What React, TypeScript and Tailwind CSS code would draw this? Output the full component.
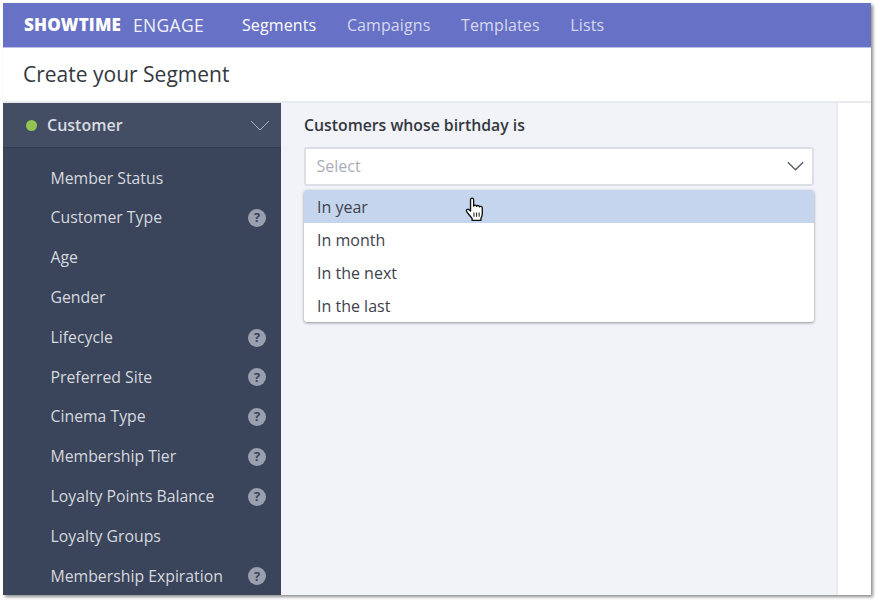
const NAV = ['Segments', 'Campaigns', 'Templates', 'Lists']

const ITEMS: { label: string; help?: boolean }[] = [
  { label: 'Member Status' },
  { label: 'Customer Type', help: true },
  { label: 'Age' },
  { label: 'Gender' },
  { label: 'Lifecycle', help: true },
  { label: 'Preferred Site', help: true },
  { label: 'Cinema Type', help: true },
  { label: 'Membership Tier', help: true },
  { label: 'Loyalty Points Balance', help: true },
  { label: 'Loyalty Groups' },
  { label: 'Membership Expiration', help: true },
]

const OPTIONS = ['In year', 'In month', 'In the next', 'In the last']

function Chevron({ className, stroke }: { className: string; stroke: number }) {
  return (
    <svg viewBox="0 0 20 11" fill="none" stroke="currentColor" strokeWidth={stroke} className={className}>
      <path d="M1 1l9 9 9-9" />
    </svg>
  )
}

function HandCursor() {
  return (
    <svg width="20" height="26" viewBox="0 0 19 25" className="absolute left-[161px] top-[7px]">
      <path
        d="M5.2 2.6c0-2 3-2 3 0v6.2c.3-1.3 2.700-1.300 2.900.2.400-1.200 2.600-1 2.800.5.500-.9 2.500-.6 2.600 1v5.500c0 2.200-.6 3.200-1.300 4.500v2H6.700v-1.800C5 18.500 3.200 16.600 1.500 14c-1-1.700.9-3 2.300-1.800l1.400 1.400V2.600z"
        fill="#fff"
        stroke="#111"
        strokeWidth="1.300"
        strokeLinejoin="round"
      />
      <path d="M8.500 15v4M11 15v4M13.500 15v4" stroke="#333" strokeWidth="1.100" />
    </svg>
  )
}

export default function App() {
  return (
    <div className="h-[604px] w-[880px] overflow-hidden bg-white pl-[3px] pt-[3px] font-['Open_Sans',sans-serif]">
      <div className="flex h-[592px] w-[868px] flex-col bg-white shadow-[2px_2px_3px_rgba(0,0,0,0.45)]">
        <nav className="flex h-[45px] shrink-0 items-center border-b border-[#b9bfe6] bg-[#6771c5] pl-[21px] text-white">
          <span className="w-[109px] text-[17px] font-extrabold tracking-[0.15px]">SHOWTIME</span>
          <span className="w-[109px] text-[17.500px] tracking-[0.3px] text-[#f1f2fb]">ENGAGE</span>
          <div className="flex gap-[30.700px] text-[16px] tracking-[0.1px]">
            {NAV.map((n, i) => (
              <span key={n} className={i === 0 ? 'font-medium text-white' : 'text-[#d5d8f0]'}>
                {n}
              </span>
            ))}
          </div>
        </nav>

        <header className="flex h-[55px] shrink-0 items-center border-b-2 border-[#e9ebf0] pl-[20px] pt-[1px] text-[21px] font-normal text-[#33383f]">
          Create your Segment
        </header>

        <div className="flex min-h-0 flex-1">
          <aside className="w-[278px] shrink-0 bg-[#3a445a]">
            <div className="flex h-[45px] items-center border-b border-[#343d51] bg-[#434e65] pl-[23px] pr-[11px] text-[16px] font-semibold text-[#d8dbe1]">
              <span className="mr-[10px] h-[11px] w-[11px] rounded-full bg-[#93c353]" />
              <span className="flex-1">Customer</span>
              <Chevron stroke={1} className="h-[11px] w-[20px] text-[#aeb3bf]" />
            </div>
            <ul className="pt-[10.500px]">
              {ITEMS.map((item) => (
                <li
                  key={item.label}
                  className="flex h-[39.800px] items-center justify-between pl-[47.500px] pr-[15px] text-[15.800px] text-[#d6d9df]"
                >
                  {item.label}
                  {item.help && (
                    <span className="flex h-[18px] w-[18px] items-center justify-center rounded-full bg-[#9a9faf] text-[13px] font-bold text-[#3a445a]">
                      ?
                    </span>
                  )}
                </li>
              ))}
            </ul>
          </aside>

          <main className="w-[557px] shrink-0 border-r-2 border-[#e9ebf0] bg-[#f1f3f8] pl-[23px] pt-[12px]">
            <div className="text-[15.800px] font-semibold leading-[20px] text-[#33383f]">Customers whose birthday is</div>
            <div className="mt-[12px] flex h-[39px] w-[510px] items-center justify-between rounded-[3px] border-2 border-[#dcdfe6] bg-white pb-[1px] pl-[10.500px] pr-[8px] text-[16px] text-[#a9adb9]">
              Select
              <Chevron stroke={1.500} className="h-[10px] w-[17px] text-[#555a66]" />
            </div>
            <div className="relative mt-[4px] w-[510px] overflow-hidden rounded-[3px] bg-white text-[16px] text-[#3d424b] shadow-[0_1px_3px_rgba(0,0,0,0.4)]">
              {OPTIONS.map((o, i) => (
                <div key={o} className={`flex h-[33px] items-center pl-[13px] ${i === 0 ? 'bg-[#c6d5ee]' : ''}`}>
                  {o}
                </div>
              ))}
              <HandCursor />
            </div>
          </main>
        </div>
      </div>
    </div>
  )
}
